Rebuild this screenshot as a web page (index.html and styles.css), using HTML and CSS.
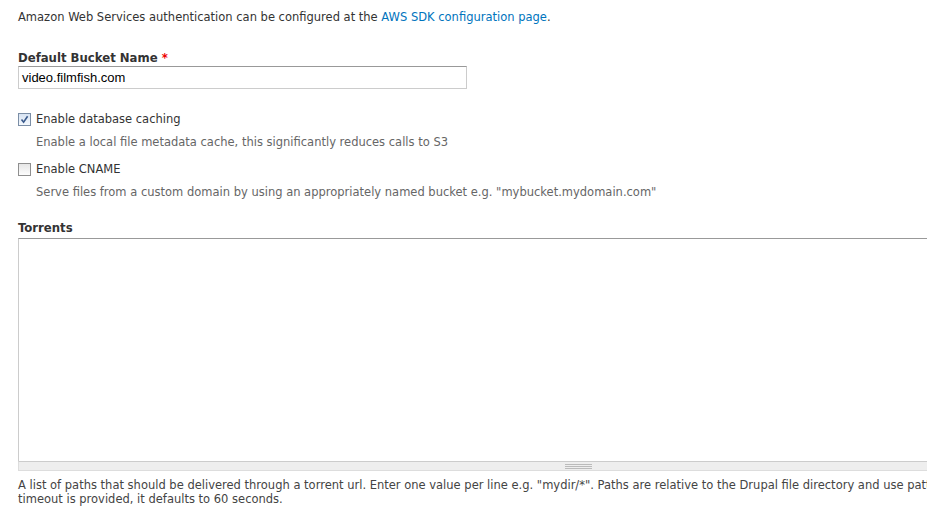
FILE: index.html
```html
<!DOCTYPE html>
<html>
<head>
<meta charset="utf-8">
<link rel="stylesheet" href="styles.css">
</head>
<body>
<div class="page">
  <p class="intro">Amazon Web Services authentication can be configured at the <a href="#">AWS SDK configuration page</a>.</p>

  <div class="field">
    <label class="field-label">Default Bucket Name <span class="req">*</span></label>
    <div class="text-input">video.filmfish.com</div>
  </div>

  <div class="check">
    <div class="check-row">
      <span class="box checked">
        <svg width="9" height="9" viewBox="0 0 9 9"><path d="M1.5 4.5 L3.6 7.2 L7.6 1.2" fill="none" stroke="#3a5a8c" stroke-width="1.6"/></svg>
      </span>
      <span class="check-label">Enable database caching</span>
    </div>
    <div class="desc">Enable a local file metadata cache, this significantly reduces calls to S3</div>
  </div>

  <div class="check">
    <div class="check-row">
      <span class="box"></span>
      <span class="check-label">Enable CNAME</span>
    </div>
    <div class="desc">Serve files from a custom domain by using an appropriately named bucket e.g. "mybucket.mydomain.com"</div>
  </div>

  <div class="field torrents">
    <label class="field-label">Torrents</label>
    <div class="textarea-wrap">
      <div class="textarea"></div>
      <div class="grippie"><span class="grip"></span></div>
    </div>
    <div class="help">A list of paths that should be delivered through a torrent url. Enter one value per line e.g. "mydir/*". Paths are relative to the Drupal file directory and use patterns as per preg_match. If no timeout is provided, it defaults to 60 seconds.</div>
  </div>
</div>
</body>
</html>
```

FILE: styles.css
```css
html, body {
  margin: 0;
  padding: 0;
  background: #fff;
  overflow: hidden;
}
body {
  width: 927px;
  height: 511px;
  font-family: "DejaVu Sans", Verdana, sans-serif;
  font-size: 11.5px;
  color: #333;
}
.page {
  padding: 9px 0 0 18px;
}
.intro {
  margin: 0;
  line-height: 16px;
  color: #333;
}
.intro a {
  color: #0074bd;
  text-decoration: none;
}
.field {
  margin-top: 25px;
}
.field-label {
  display: block;
  font-family: "DejaVu Sans Condensed", "DejaVu Sans", sans-serif;
  font-weight: bold;
  font-size: 13px;
  line-height: 16px;
  color: #333;
}
.req {
  color: #e00;
}
.text-input {
  box-sizing: border-box;
  width: 449px;
  height: 23px;
  margin-top: 0;
  border: 1px solid #ccc;
  border-top-color: #999;
  padding: 2px 3px;
  font-family: "Liberation Sans", Arial, sans-serif;
  font-size: 13px;
  line-height: 17px;
  color: #000;
}
.check {
  margin-top: 23px;
}
.check + .check {
  margin-top: 13px;
}
.check-row {
  display: flex;
  align-items: center;
  gap: 5px;
  height: 14px;
}
.box {
  box-sizing: border-box;
  width: 13px;
  height: 13px;
  border: 1px solid #8f8f8f;
  background: linear-gradient(#e6e6e6, #fdfdfd);
  display: flex;
  align-items: center;
  justify-content: center;
}
.box.checked {
  border-color: #7b8ea6;
  background: linear-gradient(#d7e3f2, #f4f8fd);
}
.check-label {
  line-height: 14px;
}
.desc {
  margin: 9px 0 0 18px;
  line-height: 14px;
  color: #666;
}
.torrents {
  margin-top: 21px;
}
.textarea-wrap {
  margin-top: 2px;
  width: 1100px;
}
.textarea {
  box-sizing: border-box;
  height: 223px;
  border: 1px solid #ccc;
  border-top-color: #999;
  border-bottom: none;
}
.grippie {
  box-sizing: border-box;
  height: 10px;
  background: #eee;
  border: 1px solid #ddd;
  border-top-color: #ccc;
  display: flex;
  justify-content: flex-start;
  padding-left: 546px;
  align-items: center;
}
.grip {
  display: block;
  width: 27px;
  height: 5px;
  border-top: 1px solid #bbb;
  border-bottom: 1px solid #bbb;
  box-sizing: border-box;
  position: relative;
}
.grip::after {
  content: "";
  position: absolute;
  left: 0;
  right: 0;
  top: 1px;
  border-top: 1px solid #bbb;
}
.help {
  margin-top: 7px;
  width: 1100px;
  line-height: 14px;
  color: #444;
}
```
